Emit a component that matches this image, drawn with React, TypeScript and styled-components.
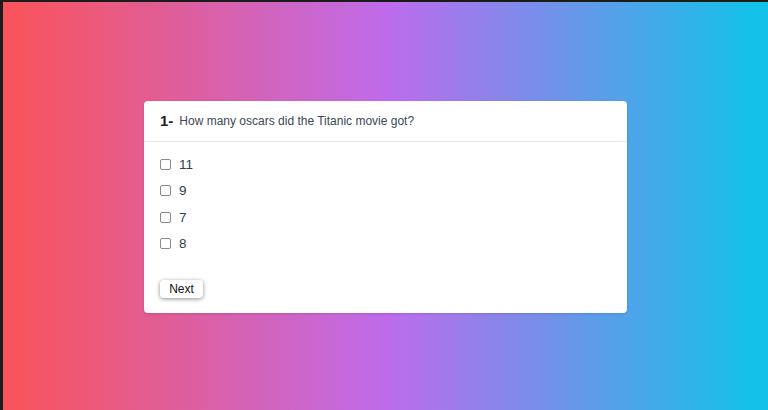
import styled, {createGlobalStyle} from 'styled-components';

const GlobalStyle = createGlobalStyle`
  html, body {
    margin: 0;
    padding: 0;
    background: #1c1c1c;
  }
  body {
    font-family: "Liberation Sans", Arial, sans-serif;
  }
`

const Screen = styled.div`
  box-sizing: border-box;
  margin: 2px 0 0 3px;
  padding-top: 2px;
  height: 408px;
  display: flex;
  align-items: center;
  justify-content: center;
  background: linear-gradient(to right, #f8545e 2%, #bf6beb 50%, #14c1e9 98%);
`

const Card = styled.div`
  width: 483px;
  background: #fff;
  border-radius: 4px;
  box-shadow: 0 1px 3px rgba(0, 0, 0, 0.12);
  color: #2c3e50;
`

const Header = styled.div`
  height: 40px;
  display: flex;
  align-items: center;
  gap: 6px;
  padding: 0 16px;
  border-bottom: 1px solid #e8e8e8;

  .num {
    font-size: 15px;
    font-weight: bold;
    color: #222;
  }

  .question {
    font-size: 12px;
    color: #3b4754;
    padding-top: 1px;
  }
`

const Body = styled.div`
  padding: 9px 16px 15px;
  display: flex;
  flex-direction: column;
  align-items: flex-start;
`

const Option = styled.label`
  height: 26.6px;
  display: flex;
  align-items: center;
  gap: 8px;
  font-size: 13.5px;

  input {
    appearance: none;
    box-sizing: border-box;
    margin: 0;
    width: 11px;
    height: 11px;
    border: 1px solid #8a8a8a;
    border-radius: 2px;
    background: #fff;
  }
`

const NextButton = styled.button`
  margin-top: 23px;
  width: 43px;
  height: 18px;
  padding: 0;
  border: none;
  border-radius: 4px;
  background: #fff;
  box-shadow: 0 1px 4px rgba(0, 0, 0, 0.45);
  font-family: inherit;
  font-size: 12px;
  color: #111;
`

const answers = ['11', '9', '7', '8'];

const App = () => {
    return (
        <>
            <GlobalStyle/>
            <Screen>
                <Card>
                    <Header>
                        <span className="num">1-</span>
                        <span className="question">How many oscars did the Titanic movie got?</span>
                    </Header>
                    <Body>
                        {answers.map(a => (
                            <Option key={a}>
                                <input type="checkbox"/>
                                <span>{a}</span>
                            </Option>
                        ))}
                        <NextButton>Next</NextButton>
                    </Body>
                </Card>
            </Screen>
        </>
    )
}

export default App
